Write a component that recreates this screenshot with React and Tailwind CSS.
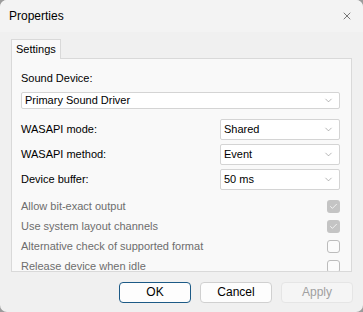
import { X, ChevronDown, Check } from 'lucide-react';

function Dropdown({ value, className = '' }) {
    return (
        <div className={`h-[21px] bg-white border border-[#d4d4d4] rounded-[2px] flex items-center justify-between pl-[3px] pr-[5px] ${className}`}>
            <span className="text-black">{value}</span>
            <ChevronDown className="w-[11px] h-[11px] text-[#7a7a7a]" strokeWidth={1.2} />
        </div>
    );
}

function OptionRow({ label, value }) {
    return (
        <div className="flex items-center justify-between h-[21px]">
            <span className="text-black">{label}</span>
            <Dropdown value={value} className="w-[120px]" />
        </div>
    );
}

function CheckRow({ label, checked }) {
    return (
        <div className="flex items-center justify-between h-[20px] shrink-0">
            <span className="text-[#6d6d6d]">{label}</span>
            {checked ? (
                <div className="w-[13px] h-[13px] rounded-[3px] bg-[#c4c4c4] flex items-center justify-center">
                    <Check className="w-[9px] h-[9px] text-white" strokeWidth={2} />
                </div>
            ) : (
                <div className="w-[13px] h-[13px] rounded-[3px] border border-[#bcbcbc] bg-[#fbfbfb]" />
            )}
        </div>
    );
}

export default function App() {
    const options = [
        { label: 'WASAPI mode:', value: 'Shared' },
        { label: 'WASAPI method:', value: 'Event' },
        { label: 'Device buffer:', value: '50 ms' },
    ];
    const checks = [
        { label: 'Allow bit-exact output', checked: true },
        { label: 'Use system layout channels', checked: true },
        { label: 'Alternative check of supported format', checked: false },
        { label: 'Release device when idle', checked: false },
    ];

    return (
        <div className="w-[363px] h-[312px] bg-[#9c9c9c]">
            <div
                className="w-[363px] h-[312px] bg-[#f0f0f0] rounded-[7px] overflow-hidden text-[11px] leading-[15px]"
                style={{ fontFamily: '"Liberation Sans", Arial, sans-serif' }}
            >
                {/* title bar */}
                <div className="h-[32px] bg-[#f3f3f3] flex items-center justify-between pl-[9px] pr-[10px]">
                    <span className="text-black text-[12px]">Properties</span>
                    <X className="w-[12px] h-[12px] text-[#222]" strokeWidth={1.2} />
                </div>

                <div className="pl-[11px] pr-[11px] pt-[7px]">
                    <div className="w-[50px] h-[20px] bg-[#f9f9f9] border border-b-0 border-[#d9d9d9] flex items-center pl-[4px] relative z-10 -mb-px">
                        <span className="text-black">Settings</span>
                    </div>
                    <div className="h-[214px] border border-[#d9d9d9] bg-[#f9f9f9] overflow-hidden pl-[9px] pr-[11px] pt-[11px] flex flex-col">
                        <div className="h-[16px] leading-[16px] text-black">Sound Device:</div>
                        <Dropdown value="Primary Sound Driver" className="mt-[6px] h-[20px]" />
                        <div className="mt-[10px] flex flex-col gap-[4px]">
                            {options.map((o) => (
                                <OptionRow key={o.label} label={o.label} value={o.value} />
                            ))}
                        </div>
                        <div className="mt-[6px] flex flex-col">
                            {checks.map((c) => (
                                <CheckRow key={c.label} label={c.label} checked={c.checked} />
                            ))}
                        </div>
                    </div>
                </div>

                <div className="mt-[10px] flex justify-end gap-[9px] pr-[10px]">
                    <button className="w-[72px] h-[21px] rounded-[4px] bg-[#fdfdfd] border border-[#1c5a86] text-black text-[12px]">OK</button>
                    <button className="w-[72px] h-[21px] rounded-[4px] bg-[#fdfdfd] border border-[#d0d0d0] text-black text-[12px]">Cancel</button>
                    <button className="w-[72px] h-[21px] rounded-[4px] bg-[#f5f5f5] border border-[#e5e5e5] text-[#a0a0a0] text-[12px]">Apply</button>
                </div>
            </div>
        </div>
    );
}
